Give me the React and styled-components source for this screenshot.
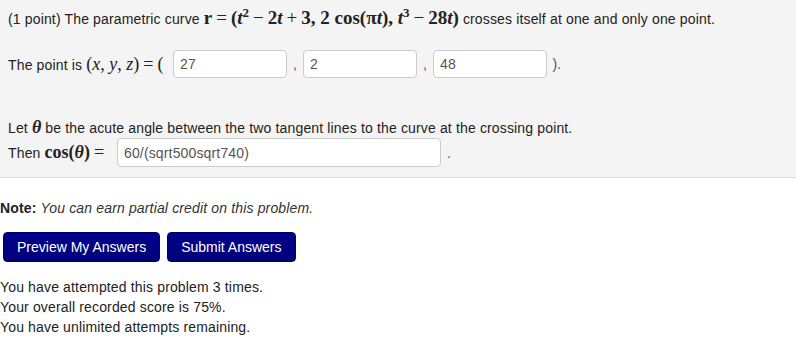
import React from 'react';
import styled, { createGlobalStyle } from 'styled-components';

const GlobalStyle = createGlobalStyle`
  html, body {
    margin: 0;
    padding: 0;
    background: #fff;
  }
  body {
    font-family: "Liberation Sans", Arial, sans-serif;
    font-size: 14px;
    letter-spacing: 0.15px;
    color: #222;
  }
`;

const Page = styled.div`
  width: 796px;
  height: 350px;
  overflow: hidden;
`;

const Problem = styled.div`
  background: #f4f4f4;
  border-bottom: 1px solid #dcdcdc;
  padding: 8px 8px 10px;
`;

const Para = styled.div`
  line-height: 20px;
  white-space: nowrap;
  margin-top: ${({ $gap }) => $gap || 0}px;
`;

const Row = styled.div`
  display: flex;
  align-items: center;
  height: ${({ $h }) => $h || 28}px;
  margin-top: ${({ $gap }) => $gap || 0}px;
`;

const Lead = styled.span`
  flex: 0 0 ${({ $w }) => $w}px;
  white-space: nowrap;
  line-height: 20px;
`;

const Math = styled.span`
  font-family: "Liberation Serif", "Times New Roman", serif;
  font-size: ${({ $size }) => $size || 18}px;
  letter-spacing: 0;
  line-height: 20px;
  font-weight: ${({ $bold }) => ($bold ? 'bold' : 'normal')};
  i {
    font-style: italic;
  }
  b {
    font-weight: bold;
  }
  .op {
    padding: 0 ${({ $op }) => $op || 4}px;
    font-weight: normal;
  }
  sup {
    font-size: 13px;
    line-height: 0;
    vertical-align: 7px;
  }
`;

const Answer = styled.input`
  box-sizing: border-box;
  width: ${({ $w }) => $w}px;
  height: ${({ $h }) => $h || 28}px;
  margin: 0;
  padding: 4px 6px;
  border: 1px solid #cccccc;
  border-radius: 4px;
  background: #fff;
  color: #555;
  font-family: "Liberation Sans", Arial, sans-serif;
  font-size: 14px;
  letter-spacing: 0.15px;
  outline: none;
`;

const Sep = styled.span`
  display: inline-block;
  width: ${({ $w }) => $w}px;
  text-align: center;
  color: #555;
`;

const Footer = styled.div`
  padding-top: 20px;
`;

const Note = styled.div`
  line-height: 20px;
  b {
    font-weight: bold;
  }
  i {
    color: #333;
  }
`;

const Buttons = styled.div`
  display: flex;
  gap: 7px;
  margin: 14px 0 15px 3px;
`;

const Button = styled.button`
  height: 30px;
  padding: 0 ${({ $px }) => $px}px;
  border: 1px solid #000066;
  border-radius: 4px;
  background: linear-gradient(#00008d, #000078);
  color: #fff;
  font-family: "Liberation Sans", Arial, sans-serif;
  font-size: 14px;
  letter-spacing: 0;
  cursor: pointer;
`;

const Status = styled.div`
  line-height: 20px;
`;

export default function App() {
  return (
    <Page>
      <GlobalStyle />
      <Problem>
        <Para>
          (1 point) The parametric curve{' '}
          <Math $bold $size={19} $op={4}>
            r<span className="op">=</span>(<i>t</i><sup>2</sup>
            <span className="op">−</span>2<i>t</i><span className="op">+</span>3, 2 cos(π<i>t</i>), <i>t</i>
            <sup>3</sup>
            <span className="op">−</span>28<i>t</i>)
          </Math>{' '}
          crosses itself at one and only one point.
        </Para>
        <Row $gap={21}>
          <Lead $w={165}>
            The point is{' '}
            <Math>
              (<i>x</i>, <i>y</i>, <i>z</i>)<span className="op">=</span>(
            </Math>
          </Lead>
          <Answer $w={114} defaultValue="27" />
          <Sep $w={16}>,</Sep>
          <Answer $w={114} defaultValue="2" />
          <Sep $w={16}>,</Sep>
          <Answer $w={114} defaultValue="48" />
          <Sep $w={20}>).</Sep>
        </Row>
        <Para $gap={39}>
          Let{' '}
          <Math>
            <b>
              <i>θ</i>
            </b>
          </Math>{' '}
          be the acute angle between the two tangent lines to the curve at the crossing point.
        </Para>
        <Row $h={29}>
          <Lead $w={109}>
            Then{' '}
            <Math $bold>
              cos(<i>θ</i>)<span className="op">=</span>
            </Math>
          </Lead>
          <Answer $w={324} $h={29} defaultValue="60/(sqrt500sqrt740)" />
          <Sep $w={16}>.</Sep>
        </Row>
      </Problem>
      <Footer>
        <Note>
          <b>Note:</b> <i>You can earn partial credit on this problem.</i>
        </Note>
        <Buttons>
          <Button $px={13}>Preview My Answers</Button>
          <Button $px={13}>Submit Answers</Button>
        </Buttons>
        <Status>You have attempted this problem 3 times.</Status>
        <Status>Your overall recorded score is 75%.</Status>
        <Status>You have unlimited attempts remaining.</Status>
      </Footer>
    </Page>
  );
}
